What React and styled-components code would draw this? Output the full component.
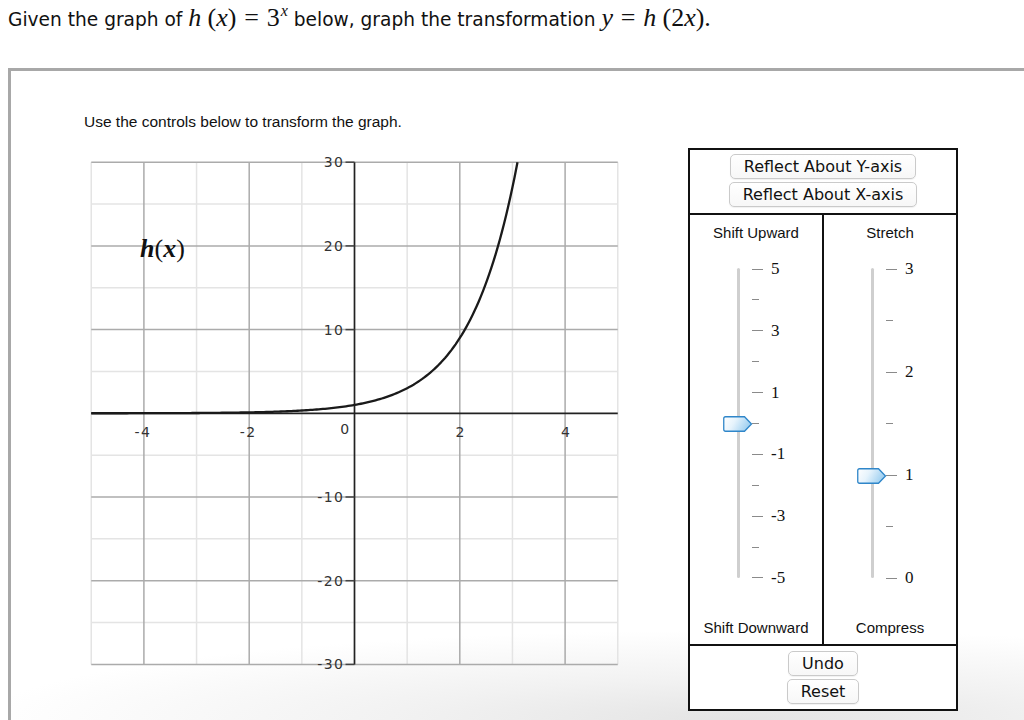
import styled, { createGlobalStyle } from "styled-components"

const GlobalStyle = createGlobalStyle`
	html, body {
		margin: 0;
		padding: 0;
		background: #fff;
	}
	body {
		font-family: "DejaVu Sans", Verdana, sans-serif;
		color: #111;
	}
`

const Page = styled.div`
	display: flex;
	flex-direction: column;
	height: 100vh;
	overflow: hidden;
`

const Title = styled.div`
	box-sizing: border-box;
	height: 68px;
	padding: 4px 0 0 8px;
	font-family: "DejaVu Sans", Verdana, sans-serif;
	font-size: 18.6px;
	line-height: 28px;
	color: #111;
	white-space: nowrap;
`

const M = styled.span`
	font-family: "Liberation Serif", "Times New Roman", serif;
	font-size: 26px;

	i {
		font-style: italic;
	}
	sup {
		font-size: 16px;
		vertical-align: 10px;
		line-height: 0;
		margin-left: 1px;
	}
`

const Gap = styled.span`
	display: inline-block;
	width: ${(p) => p.$w}em;
`

const Eq = styled.span`
	margin: 0 0.3em;
`

const Frame = styled.div`
	flex: 1;
	margin-left: 8px;
	border-top: 3px solid #a8a8a8;
	border-left: 3px solid #a8a8a8;
	padding: 42px 0 0 69px;
	background: radial-gradient(ellipse 760px 90px at 72% 100%, #e4e4e4 0%, rgba(236, 236, 236, 0.7) 45%, rgba(255, 255, 255, 0) 100%);
`

const Instruction = styled.div`
	padding-left: 4px;
	font-family: "Liberation Sans", Arial, sans-serif;
	font-size: 15.5px;
	line-height: 18px;
	color: #111;
`

const Row = styled.div`
	display: flex;
	align-items: flex-start;
	margin-top: 17px;
`

const GraphSvg = styled.svg`
	display: block;
	flex: none;
	margin-top: 2px;
`

const Panel = styled.div`
	flex: none;
	width: 270px;
	box-sizing: border-box;
	margin-left: 58px;
	border: 2px solid #111;
	background: #fff;
`

const ButtonStack = styled.div`
	display: flex;
	flex-direction: column;
	align-items: center;
	gap: 3px;
	padding: ${(p) => p.$pad};
	border-top: ${(p) => (p.$divided ? "2px solid #111" : "none")};
`

const Button = styled.button`
	box-sizing: border-box;
	height: 25px;
	padding: 0 13px;
	border: 1px solid #cacaca;
	border-radius: 5px;
	background: linear-gradient(#ffffff, #f7f7f7);
	box-shadow: 0 1px 1px rgba(0, 0, 0, 0.06);
	font-family: "DejaVu Sans", Verdana, sans-serif;
	font-size: 16px;
	line-height: 23px;
	color: #111;
`

const Columns = styled.div`
	display: grid;
	grid-template-columns: 134px 132px;
	border-top: 2px solid #111;
`

const Column = styled.div`
	display: flex;
	flex-direction: column;
	align-items: center;
	padding: 9px 0 7px;
	border-right: ${(p) => (p.$first ? "2px solid #111" : "none")};
`

const ColLabel = styled.div`
	height: 18px;
	font-family: "Liberation Sans", Arial, sans-serif;
	font-size: 15px;
	line-height: 18px;
	color: #111;
	margin-bottom: ${(p) => p.$after || 0}px;
	margin-top: ${(p) => p.$before || 0}px;
`

const SliderBody = styled.div`
	position: relative;
	align-self: stretch;
	display: flex;
	height: 310px;
	padding-left: 47px;
`

const Track = styled.div`
	width: 3px;
	height: 310px;
	border-radius: 2px;
	background: #cfcfcf;
`

const TickList = styled.div`
	display: flex;
	flex-direction: column;
	justify-content: space-between;
	height: 309px;
	margin: 1px 0 0 12px;
`

const Tick = styled.div`
	display: flex;
	align-items: center;
	height: 0;
`

const Dash = styled.span`
	width: ${(p) => (p.$major ? 11 : 7)}px;
	height: 1px;
	background: #8a8a8a;
`

const TickLabel = styled.span`
	margin-left: 8px;
	font-family: "Liberation Serif", "Times New Roman", serif;
	font-size: 17px;
	color: #111;
`

const Thumb = styled.svg`
	position: absolute;
	left: 33px;
	display: block;
`

const ThumbShape = ({ top }) => (
	<Thumb width="30" height="16" viewBox="0 0 30 16" style={{ top }}>
		<defs>
			<linearGradient id="thumbFill" x1="0" y1="0" x2="1" y2="0.3">
				<stop offset="0" stopColor="#ffffff" />
				<stop offset="0.45" stopColor="#e6f3fc" />
				<stop offset="1" stopColor="#9fd0f1" />
			</linearGradient>
		</defs>
		<path
			d="M2.5 0.75 H21.5 L28.5 8 L21.5 15.25 H2.5 Q0.75 15.25 0.75 13.5 V2.5 Q0.75 0.75 2.5 0.75 Z"
			fill="url(#thumbFill)"
			stroke="#2f86c9"
			strokeWidth="1.3"
		/>
	</Thumb>
)

const Slider = ({ ticks, min, max, value }) => {
	const frac = (max - value) / (max - min)
	const top = 1 + frac * 309 - 7.5
	return (
		<SliderBody>
			<Track />
			<TickList>
				{ticks.map((t) => (
					<Tick key={t.v}>
						<Dash $major={t.label !== undefined} />
						{t.label !== undefined && <TickLabel>{t.label}</TickLabel>}
					</Tick>
				))}
			</TickList>
			<ThumbShape top={top} />
		</SliderBody>
	)
}

const shiftTicks = [5, 4, 3, 2, 1, 0, -1, -2, -3, -4, -5].map((v) => ({
	v,
	label: Math.abs(v) % 2 === 1 ? String(v) : undefined,
}))

const stretchTicks = [3, 2.5, 2, 1.5, 1, 0.5, 0].map((v) => ({
	v,
	label: Number.isInteger(v) ? String(v) : undefined,
}))

// graph geometry (svg coords)
const X0 = 274.5
const Y0 = 263.3
const SX = 52.65
const SY = 8.37
const px = (x) => X0 + x * SX
const py = (y) => Y0 - y * SY

const curvePath = () => {
	const pts = []
	const end = Math.log(30) / Math.log(3)
	for (let x = -5; x < end; x += 0.04) pts.push([px(x), py(Math.pow(3, x))])
	pts.push([px(end), py(30)])
	return "M" + pts.map((p) => p[0].toFixed(2) + " " + p[1].toFixed(2)).join(" L")
}

const Graph = () => {
	const xs = [-5, -4, -3, -2, -1, 0, 1, 2, 3, 4, 5]
	const ys = [-30, -25, -20, -15, -10, -5, 0, 5, 10, 15, 20, 25, 30]
	const left = px(-5)
	const right = px(5)
	const top = py(30)
	const bottom = py(-30)
	const labelFont = {
		fontFamily: "'DejaVu Sans', Verdana, sans-serif",
		fontSize: 14,
		fill: "#333",
		letterSpacing: 1.5,
	}
	return (
		<GraphSvg width="550" height="530" viewBox="0 0 550 530">
			{xs
				.filter((x) => x % 2 !== 0)
				.map((x) => (
					<line key={"vx" + x} x1={px(x)} x2={px(x)} y1={top} y2={bottom} stroke="#e4e4e4" strokeWidth="1.5" />
				))}
			{ys
				.filter((y) => y % 10 !== 0)
				.map((y) => (
					<line key={"hy" + y} x1={left} x2={right} y1={py(y)} y2={py(y)} stroke="#e4e4e4" strokeWidth="1.5" />
				))}
			{xs
				.filter((x) => x % 2 === 0 && x !== 0)
				.map((x) => (
					<line key={"Vx" + x} x1={px(x)} x2={px(x)} y1={top} y2={bottom} stroke="#ababab" strokeWidth="1.5" />
				))}
			{ys
				.filter((y) => y % 10 === 0 && y !== 0)
				.map((y) => (
					<line key={"Hy" + y} x1={left} x2={right} y1={py(y)} y2={py(y)} stroke="#ababab" strokeWidth="1.5" />
				))}
			<line x1={left} x2={right} y1={Y0} y2={Y0} stroke="#222" strokeWidth="1.7" />
			<line x1={X0} x2={X0} y1={top} y2={bottom} stroke="#222" strokeWidth="1.7" />
			{[-30, -20, -10, 10, 20, 30].map((y) => (
				<g key={"ly" + y}>
					<line x1={X0 - 9} x2={X0} y1={py(y)} y2={py(y)} stroke="#444" strokeWidth="1.5" />
					<text x={X0 - 10} y={py(y) + 5} textAnchor="end" style={labelFont}>
						{y < 0 ? "-" + Math.abs(y) : y}
					</text>
				</g>
			))}
			{[-4, -2, 2, 4].map((x) => (
				<text key={"lx" + x} x={px(x) + (x < 0 ? -1 : 1)} y={Y0 + 24} textAnchor="middle" style={labelFont}>
					{x < 0 ? "-" + Math.abs(x) : x}
				</text>
			))}
			<text x={X0 - 9} y={Y0 + 21} textAnchor="middle" style={labelFont}>
				0
			</text>
			<path d={curvePath()} fill="none" stroke="#1a1a1a" strokeWidth="2.3" strokeLinejoin="round" />
			<text x="60" y="107" style={{ fontFamily: "'Liberation Serif', 'Times New Roman', serif", fontSize: 26, fill: "#111" }}>
				<tspan fontWeight="bold" fontStyle="italic">h</tspan>
				<tspan>(</tspan>
				<tspan fontWeight="bold" fontStyle="italic">x</tspan>
				<tspan>)</tspan>
			</text>
		</GraphSvg>
	)
}

const App = () => {
	return (
		<Page>
			<GlobalStyle />
			<Title>
				Given the graph of{" "}
				<M>
					<i>h</i>
					<Gap $w={0.24} />(<i>x</i>)<Eq>=</Eq>3<sup><i>x</i></sup>
				</M>{" "}
				below, graph the transformation{" "}
				<M>
					<i>y</i>
					<Eq>=</Eq>
					<i>h</i>
					<Gap $w={0.24} />(2<i>x</i>).
				</M>
			</Title>
			<Frame>
				<Instruction>Use the controls below to transform the graph.</Instruction>
				<Row>
					<Graph />
					<Panel>
						<ButtonStack $pad="4px 0 6px">
							<Button>Reflect About Y-axis</Button>
							<Button>Reflect About X-axis</Button>
						</ButtonStack>
						<Columns>
							<Column $first>
								<ColLabel $after={26}>Shift Upward</ColLabel>
								<Slider ticks={shiftTicks} min={-5} max={5} value={0} />
								<ColLabel $before={41}>Shift Downward</ColLabel>
							</Column>
							<Column>
								<ColLabel $after={26}>Stretch</ColLabel>
								<Slider ticks={stretchTicks} min={0} max={3} value={1} />
								<ColLabel $before={41}>Compress</ColLabel>
							</Column>
						</Columns>
						<ButtonStack $divided $pad="5px 0 5px">
							<Button>Undo</Button>
							<Button>Reset</Button>
						</ButtonStack>
					</Panel>
				</Row>
			</Frame>
		</Page>
	)
}

export default App
